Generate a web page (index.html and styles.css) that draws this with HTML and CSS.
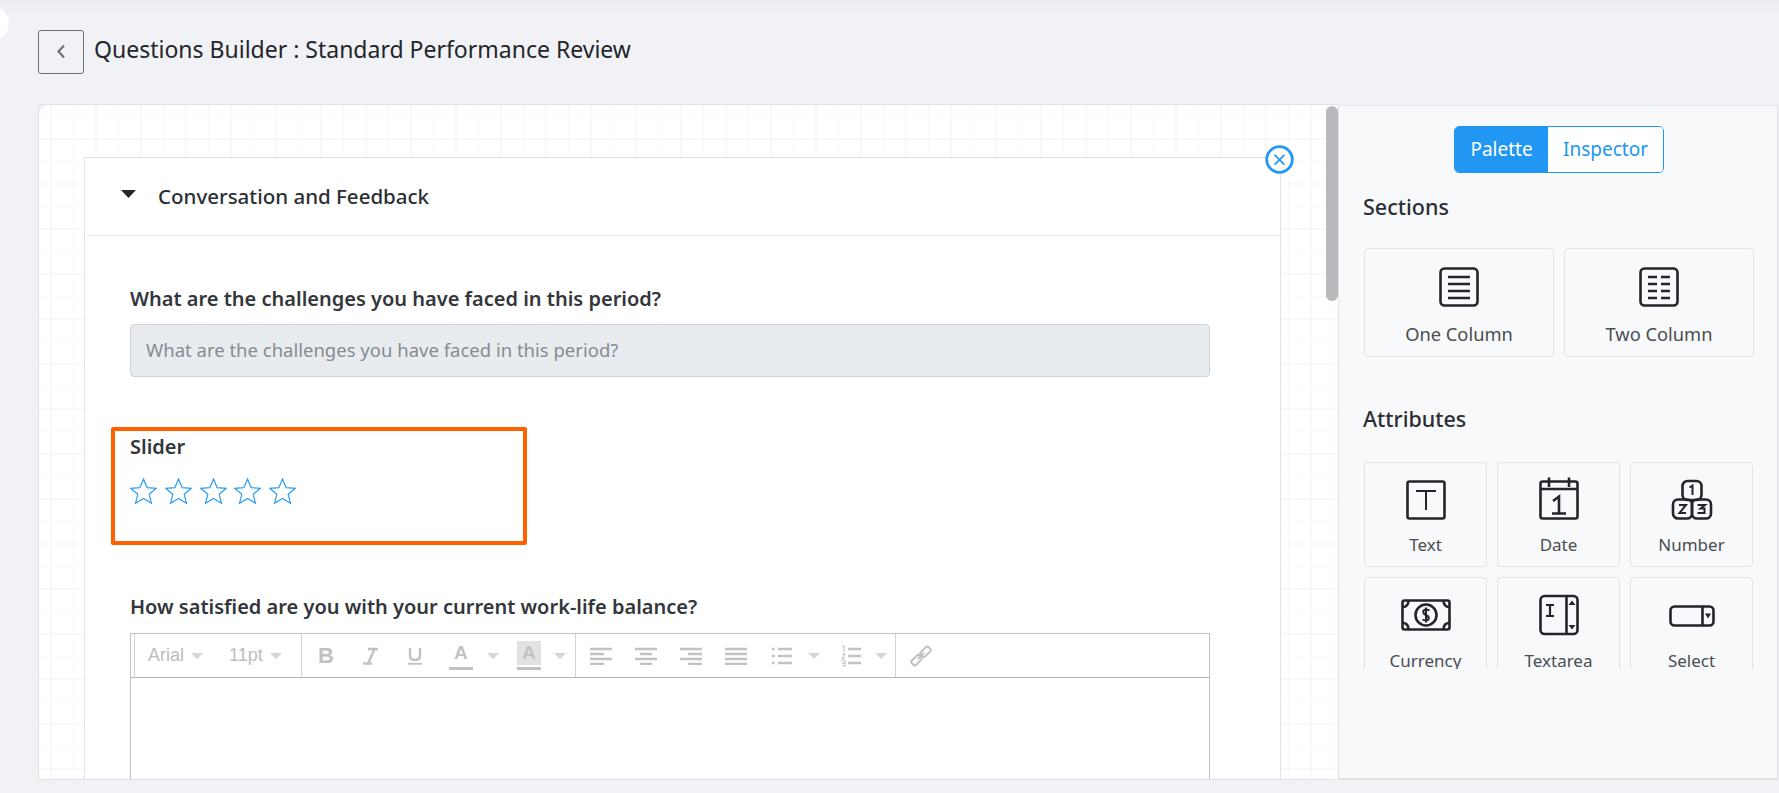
FILE: index.html
```html
<!DOCTYPE html>
<html lang="en">
<head>
<meta charset="utf-8">
<title>Questions Builder</title>
<link rel="stylesheet" href="styles.css">
</head>
<body>
<span class="corner-blob"></span>
<header class="topbar">
  <button class="back-btn" aria-label="Back">
    <svg width="10" height="16" viewBox="0 0 10 16"><path d="M8 1.5 L2.5 7.5 L8 13.5" fill="none" stroke="#6d7178" stroke-width="2.2"/></svg>
  </button>
  <h1 class="page-title">Questions Builder : Standard Performance Review</h1>
</header>
<main class="workspace">
  <section class="canvas">
    <div class="scroll-thumb"></div>
    <article class="card">
      <button class="close-btn" aria-label="Remove">
        <svg width="29" height="29" viewBox="0 0 29 29"><circle cx="14.5" cy="14.5" r="12.8" fill="#fff" stroke="#2196f3" stroke-width="2.8"/><path d="M9.6 9.8 L19.4 19.6 M19.4 9.8 L9.6 19.6" stroke="#2196f3" stroke-width="1.7"/></svg>
      </button>
      <div class="card-head">
        <svg class="caret" width="15" height="8" viewBox="0 0 15 8"><path d="M0 0 H15 L7.5 8 Z" fill="#23262b"/></svg>
        <h2 class="card-title">Conversation and Feedback</h2>
      </div>
      <div class="card-body">
        <div class="field-first">
          <label class="field-label">What are the challenges you have faced in this period?</label>
          <div class="fake-input">What are the challenges you have faced in this period?</div>
        </div>
        <div class="field-slider">
          <div class="highlight-box"></div>
          <label class="field-label">Slider</label>
          <div class="stars">
            <svg class="star" viewBox="0 0 27 26"><path d="M13.5 1 L17.1 9.6 L26.3 10.3 L19.2 16.3 L21.5 25.3 L13.5 20.4 L5.5 25.3 L7.8 16.3 L0.7 10.3 L9.9 9.6 Z"/></svg>
            <svg class="star" viewBox="0 0 27 26"><path d="M13.5 1 L17.1 9.6 L26.3 10.3 L19.2 16.3 L21.5 25.3 L13.5 20.4 L5.5 25.3 L7.8 16.3 L0.7 10.3 L9.9 9.6 Z"/></svg>
            <svg class="star" viewBox="0 0 27 26"><path d="M13.5 1 L17.1 9.6 L26.3 10.3 L19.2 16.3 L21.5 25.3 L13.5 20.4 L5.5 25.3 L7.8 16.3 L0.7 10.3 L9.9 9.6 Z"/></svg>
            <svg class="star" viewBox="0 0 27 26"><path d="M13.5 1 L17.1 9.6 L26.3 10.3 L19.2 16.3 L21.5 25.3 L13.5 20.4 L5.5 25.3 L7.8 16.3 L0.7 10.3 L9.9 9.6 Z"/></svg>
            <svg class="star" viewBox="0 0 27 26"><path d="M13.5 1 L17.1 9.6 L26.3 10.3 L19.2 16.3 L21.5 25.3 L13.5 20.4 L5.5 25.3 L7.8 16.3 L0.7 10.3 L9.9 9.6 Z"/></svg>
          </div>
        </div>
        <div class="field-editor">
          <label class="field-label">How satisfied are you with your current work-life balance?</label>
          <div class="editor">
            <div class="toolbar">
              <div class="tb-group tb-fonts">
                <span class="tb-text tb-arial">Arial</span><i class="tb-arrow tb-a1"></i>
                <span class="tb-text tb-size">11pt</span><i class="tb-arrow tb-a1"></i>
              </div>
              <div class="tb-group tb-format">
                <span class="tb-b">B</span>
                <svg class="tb-i" width="17" height="18" viewBox="0 0 17 18"><path d="M6 2 H16 M12.5 2 L6.5 15.5 M1 16.5 H10" stroke="#c2c2c2" stroke-width="2.4" fill="none"/></svg>
                <svg class="tb-u" width="14" height="18" viewBox="0 0 14 18"><path d="M2 1 V9 Q2 13 7 13 Q12 13 12 9 V1" stroke="#c2c2c2" stroke-width="2.4" fill="none"/><path d="M0 16.8 H14" stroke="#c2c2c2" stroke-width="1.8"/></svg>
                <span class="tb-color"><span class="tb-a">A</span></span><i class="tb-arrow tb-a2"></i>
                <span class="tb-color tb-hilite"><span class="tb-a">A</span></span><i class="tb-arrow tb-a3"></i>
              </div>
              <div class="tb-group tb-para">
                <svg width="22" height="18" viewBox="0 0 22 18"><path d="M0 2 H22 M0 7 H14 M0 12 H22 M0 17 H14" stroke="#c2c2c2" stroke-width="2.6"/></svg>
                <svg width="22" height="18" viewBox="0 0 22 18"><path d="M0 2 H22 M5 7 H17 M0 12 H22 M5 17 H17" stroke="#c2c2c2" stroke-width="2.6"/></svg>
                <svg width="22" height="18" viewBox="0 0 22 18"><path d="M0 2 H22 M8 7 H22 M0 12 H22 M8 17 H22" stroke="#c2c2c2" stroke-width="2.6"/></svg>
                <svg width="22" height="18" viewBox="0 0 22 18"><path d="M0 2 H22 M0 7 H22 M0 12 H22 M0 17 H22" stroke="#c2c2c2" stroke-width="2.6"/></svg>
                <svg class="tb-list" width="20" height="20" viewBox="0 0 20 20"><path d="M6 3 H20 M6 10 H20 M6 17 H20" stroke="#c2c2c2" stroke-width="2.6"/><path d="M0 3 H2.5 M0 10 H2.5 M0 17 H2.5" stroke="#c2c2c2" stroke-width="2.4"/></svg><i class="tb-arrow tb-a4"></i>
                <svg class="tb-olist" width="20" height="22" viewBox="0 0 20 22"><path d="M7 4 H20 M7 11 H20 M7 18 H20" stroke="#c2c2c2" stroke-width="2.6"/><path d="M1 1 H3 V7 M1 9 H4 L1 14 H4 M1 16 H4 V21 H1 M1 18.5 H3.5" stroke="#c2c2c2" stroke-width="1.1" fill="none"/></svg><i class="tb-arrow tb-a5"></i>
              </div>
              <div class="tb-group tb-link">
                <svg width="22" height="22" viewBox="0 0 22 22"><g fill="none" stroke="#c2c2c2" stroke-width="2"><rect x="1" y="12.2" width="11" height="6" rx="2" transform="rotate(-45 6.5 15.2)"/><rect x="10" y="3.8" width="11" height="6" rx="2" transform="rotate(-45 15.5 6.8)"/><path d="M8 14 L14 8"/></g></svg>
              </div>
            </div>
            <div class="editor-area"></div>
          </div>
        </div>
      </div>
    </article>
  </section>
  <aside class="panel">
    <div class="panel-scroll">
      <div class="toggle">
        <span class="toggle-on">Palette</span>
        <span class="toggle-off">Inspector</span>
      </div>
      <h3 class="panel-heading">Sections</h3>
      <div class="section-grid">
        <div class="tile tile-section">
          <svg class="tile-icon" viewBox="0 0 40 40"><rect x="1.5" y="1.5" width="37" height="37" rx="4" fill="none"/><path d="M9 10 H31 M9 17 H31 M9 24 H31 M9 31 H31"/></svg>
          <span class="tile-label tile-label-lg">One Column</span>
        </div>
        <div class="tile tile-section">
          <svg class="tile-icon" viewBox="0 0 40 40"><rect x="1.5" y="1.5" width="37" height="37" rx="4" fill="none"/><path d="M9 10 H18 M22 10 H31 M9 17 H18 M22 17 H31 M9 24 H18 M22 24 H31 M9 31 H18 M22 31 H31"/></svg>
          <span class="tile-label tile-label-lg">Two Column</span>
        </div>
      </div>
      <h3 class="panel-heading panel-heading-attr">Attributes</h3>
      <div class="attr-grid">
        <div class="tile">
          <svg class="tile-icon" viewBox="0 0 40 40"><rect x="1.5" y="1.5" width="37" height="37" rx="2" fill="none"/><path d="M10 11 H30 M20 11 V30" stroke-width="2"/></svg>
          <span class="tile-label">Text</span>
        </div>
        <div class="tile">
          <svg class="tile-icon" viewBox="0 0 40 40"><rect x="1.5" y="1.5" width="37" height="37" rx="2" fill="none"/><path d="M1.5 9 H38.5 M10 -2.5 V7 M30 -2.5 V7"/><path d="M14 21 L20 16.5 V33 M13 33.5 H27" fill="none"/></svg>
          <span class="tile-label">Date</span>
        </div>
        <div class="tile">
          <svg class="tile-icon" viewBox="0 0 40 40"><g fill="none"><rect x="10.5" y="1" width="19" height="19" rx="5"/><rect x="1" y="19.5" width="19" height="19" rx="5"/><rect x="20" y="19.5" width="19" height="19" rx="5"/><path d="M17.5 7.5 L20.5 5.5 V15 M7 25 H14 L7.5 33 H14" stroke-width="2"/><path d="M25.5 25 H33 L28.5 28.5 H32.5 V33 H25.5" stroke-width="2"/></g></svg>
          <span class="tile-label">Number</span>
        </div>
        <div class="tile">
          <svg class="tile-icon tile-icon-wide" viewBox="0 0 50 40"><rect x="1.5" y="5.5" width="47" height="29" rx="2" fill="none"/><circle cx="25" cy="20" r="10.5" fill="none"/><path d="M2 12 Q7 12 7.5 6 M48 12 Q43 12 42.5 6 M2 28 Q7 28 7.5 34 M48 28 Q43 28 42.5 34" fill="none"/><path d="M28.5 15.5 Q25 13.5 22.5 15.5 Q21.5 18.5 25 20 Q28.5 21.5 27.5 24.5 Q25 26.5 21.5 24.5 M25 12.5 V27.5" fill="none" stroke-width="2"/></svg>
          <span class="tile-label tile-label-low">Currency</span>
        </div>
        <div class="tile">
          <svg class="tile-icon" viewBox="0 0 40 40"><rect x="1.5" y="1" width="37" height="38" rx="4" fill="none"/><path d="M27.5 1 V39"/><path d="M7 10 H15 M11 10 V21 M7 21 H15" stroke-width="2.2" fill="none"/><path d="M33 5.5 L36.5 10 H29.5 Z M33 34.5 L29.5 30 H36.5 Z" stroke="none" fill="#22252b"/></svg>
          <span class="tile-label tile-label-low">Textarea</span>
        </div>
        <div class="tile">
          <svg class="tile-icon tile-icon-select" viewBox="0 0 46 22"><rect x="1.5" y="1.5" width="43" height="19" rx="4" fill="none"/><path d="M33.5 1.5 V20.5"/><path d="M36 8.5 H42 L39 13.5 Z" stroke="none" fill="#22252b"/></svg>
          <span class="tile-label tile-label-low">Select</span>
        </div>
      </div>
    </div>
  </aside>
</main>
</body>
</html>
```

FILE: styles.css
```css
* { box-sizing: border-box; }
html, body { margin: 0; height: 793px; overflow: hidden; }
body {
  background: linear-gradient(#eaecf0 0, #f0f2f6 14px);
  font-family: "Noto Sans", Roboto, sans-serif;
  color: #2b2e33;
  position: relative;
}
.corner-blob {
  position: absolute; left: -26px; top: 6px;
  width: 35px; height: 35px; border-radius: 50%; background: #fff;
}
.topbar {
  height: 104px; padding: 29px 0 0 38px;
  display: flex; align-items: flex-start; gap: 10px;
}
.back-btn {
  width: 46px; height: 44px; background: #fff0; padding: 0; margin-top: 1px;
  border: 1px solid #6f7278; border-radius: 3px;
  display: flex; align-items: center; justify-content: center;
}
.page-title {
  margin: 0; font-weight: 400; font-size: 23px; line-height: 40px;
  color: #23262b;
}
.workspace { display: flex; height: 676px; margin-left: 38px; }

.canvas {
  width: 1300px; flex: none; position: relative; overflow: hidden;
  border: 1px solid #dfe1e6; border-right: 0;
  padding: 52px 0 0 45px;
  background-color: #fff;
  background-image:
    linear-gradient(#f0f1f4 1px, transparent 1px),
    linear-gradient(90deg, #f0f1f4 1px, transparent 1px),
    linear-gradient(#f7f8f9 1px, transparent 1px),
    linear-gradient(90deg, #f7f8f9 1px, transparent 1px);
  background-size: 45px 45px, 45px 45px, 45px 45px, 45px 45px;
  background-position: 0 33.5px, 11.5px 0, 0 11px, 34px 0;
}
.canvas::before {
  content: ""; position: absolute; left: 0; top: 0; width: 10px; height: 10px;
  background: radial-gradient(circle at 100% 100%, transparent 9.5px, #f0f2f6 10px);
}
.scroll-thumb {
  position: absolute; right: 0; top: 1px; width: 12px; height: 195px;
  background: #b8b8bd; border-radius: 6px;
}
.card {
  width: 1197px; background: #fff; position: relative;
  border: 1px solid #e0e2e8; border-bottom: 0; height: 640px;
}
.close-btn {
  position: absolute; right: -14px; top: -13px; width: 29px; height: 29px;
  padding: 0; border: 0; background: none; display: block;
}
.close-btn svg { display: block; }
.card-head {
  height: 78px; border-bottom: 1px solid #eeeff2;
  display: flex; align-items: center; padding-left: 36px; gap: 22px;
}
.caret { margin-top: -6px; }
.card-title { margin: -2px 0 0; font-size: 20.5px; font-weight: 500; color: #2b2e33; }
.card-body { padding: 50px 70px 0 45px; }
.field-label {
  display: block; font-size: 20px; font-weight: 600; line-height: 26px;
  color: #33363b;
}
.fake-input {
  margin-top: 12px; height: 53px; line-height: 50px; padding-left: 15px;
  background: #e9ecef; border: 1px solid #ced4da; border-radius: 4px;
  color: #868b92; font-size: 18.5px;
}
.field-slider { margin-top: 57px; position: relative; }
.highlight-box {
  position: absolute; left: -19px; top: -7px; width: 416px; height: 118px;
  border: 4.5px solid #ff6000; border-radius: 2px;
  pointer-events: none;
}
.stars { display: flex; gap: 7.75px; margin-top: 18px; height: 26px; }
.star { width: 27px; height: 26px; flex: none; fill: none; stroke: #2e9df4; stroke-width: 1.2; }
.field-editor { margin-top: 90px; }
.editor { margin-top: 13px; border: 1px solid #c0c0c0; height: 160px; background: #fff; }
.toolbar { height: 44px; display: flex; border-bottom: 1px solid #b4b4b4; padding-left: 3px; }
.tb-group {
  position: relative; height: 43px; display: flex; align-items: center;
  border-left: 1px solid #d4d4d4;
}
.tb-fonts { width: 167px; padding-left: 13px; }
.tb-format { width: 274px; }
.tb-para { width: 320px; padding-left: 14px; gap: 23px; }
.tb-link { flex: none; padding-left: 14px; width: 60px; }
.tb-text { font-family: "Liberation Sans", Arial, sans-serif; font-size: 18px; color: #bdbdbd; }
.tb-size { margin-left: 26px; }
.tb-arrow {
  width: 0; height: 0; flex: none;
  border-left: 6px solid transparent; border-right: 6px solid transparent;
  border-top: 6px solid #d6d6d6; display: block;
}
.tb-a1 { margin-left: 7px; }
.tb-a2 { margin-left: 14px; }
.tb-a3 { margin-left: 13px; }
.tb-a4 { margin-left: -7px; margin-right: -2px; }
.tb-a5 { margin-left: -9px; margin-right: 0; }
.tb-b { font-family: "Liberation Sans", sans-serif; font-weight: 700; font-size: 22px; color: #c2c2c2; margin-left: 16px; }
.tb-i { margin-left: 28px; }
.tb-u { margin-left: 29px; }
.tb-color {
  margin-left: 27px; width: 24px; height: 29px; border-bottom: 3px solid #c2c2c2;
  display: block; text-align: center;
}
.tb-hilite { margin-left: 18px; background: linear-gradient(#e2e2e2 24px, #fff 24px); }
.tb-a { font-family: "Liberation Sans", sans-serif; font-weight: 700; font-size: 19px; line-height: 24px; color: #c2c2c2; display: block; }
.tb-list { margin-left: 2px; }
.tb-olist { margin-left: 0; }

.panel {
  width: 440px; flex: none; background: #f8f9fb; margin-top: 1px;
  border-left: 1px solid #e0e2e8; border-top: 1px solid #e6e7eb;
  border-right: 1px solid #e0e2e8; border-bottom: 2px solid #e0e2e6;
}
.panel-scroll { height: 563px; overflow: hidden; padding: 20px 0 0 25px; }
.toggle {
  display: flex; width: 210px; height: 47px; margin-left: 90px;
  border: 1px solid #2196f3; border-radius: 5px; overflow: hidden;
  font-size: 19px; line-height: 45px; text-align: center;
}
.toggle-on { width: 93px; flex: none; background: #2196f3; color: #fff; }
.toggle-off { flex: 1; color: #2196f3; background: #fff; }
.panel-heading { margin: 22px 0 0 -1px; font-size: 21.5px; font-weight: 500; line-height: 24px; color: #2b2e33; }
.panel-heading-attr { margin-top: 50px; }
.section-grid { display: grid; grid-template-columns: 190px 190px; gap: 10px; margin-top: 29px; }
.attr-grid { display: grid; grid-template-columns: 123px 123px 123px; grid-auto-rows: 105px; gap: 10px; margin-top: 31px; }
.tile {
  border: 1px solid #e0e3e7; border-radius: 4px;
  display: flex; flex-direction: column; align-items: center;
  padding-top: 17px; height: 105px;
}
.tile-section { height: 109px; padding-top: 18px; }
.tile-icon {
  width: 40px; height: 40px; flex: none;
  stroke: #22252b; stroke-width: 2.6; overflow: visible;
}
.tile-icon-wide { width: 50px; }
.tile-icon-select { width: 46px; height: 22px; margin: 10px 0 8px; }
.tile-label { font-size: 17px; color: #4a4d52; margin-top: 14px; line-height: 22px; }
.tile-label-low { margin-top: 15px; }
.tile-label-lg { font-size: 18.3px; margin-top: 16px; }
```
